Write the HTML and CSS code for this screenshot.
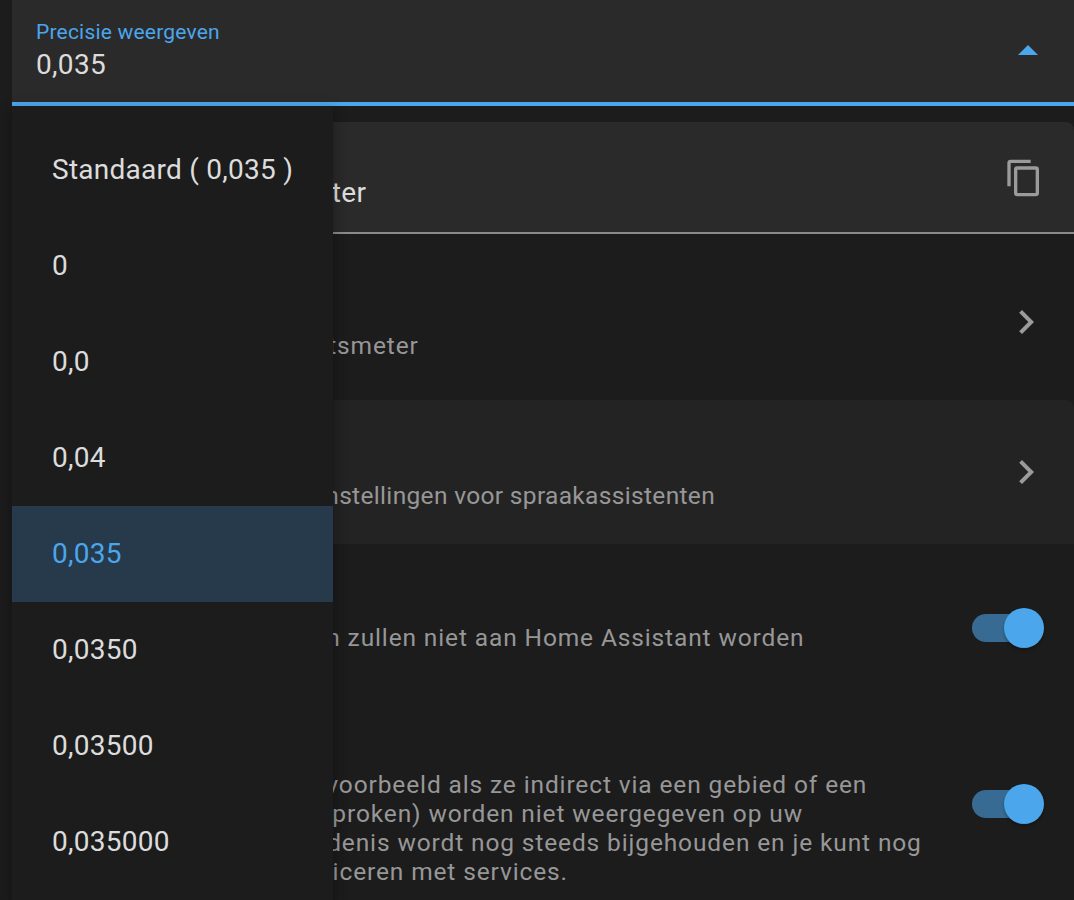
FILE: index.html
```html
<!DOCTYPE html>
<html lang="nl">
  <head>
    <meta charset="UTF-8" />
    <meta name="viewport" content="width=device-width, initial-scale=1.0" />
    <title>Entiteit instellingen</title>
    <link rel="stylesheet" href="styles.css">
  </head>
  <body>
    <div class="page">
      <div class="select">
        <div class="select-text">
          <div class="select-label">Precisie weergeven</div>
          <div class="select-value">0,035</div>
        </div>
        <span class="select-arrow"></span>
      </div>

      <div class="field">
        <div class="field-value">Entiteits-ID: sensor.meter</div>
        <svg class="icon icon-copy" viewBox="0 0 24 24"><path d="M19,21H8V7H19M19,5H8A2,2 0 0,0 6,7V21A2,2 0 0,0 8,23H19A2,2 0 0,0 21,21V7A2,2 0 0,0 19,5M16,1H4A2,2 0 0,0 2,3V17H4V3H16V1Z" /></svg>
      </div>

      <div class="row row-device">
        <div class="row-text">
          <div class="row-title">Apparaat</div>
          <div class="row-sub">Slimme teller electriciteitsmeter</div>
        </div>
        <svg class="icon icon-chevron" viewBox="0 0 24 24"><path d="M8.59,16.58L13.17,12L8.59,7.41L10,6L16,12L10,18L8.59,16.58Z" /></svg>
      </div>

      <div class="row row-voice">
        <div class="row-text">
          <div class="row-title">Spraakassistenten</div>
          <div class="row-sub">Beheer nu, al de entiteitsinstellingen voor spraakassistenten</div>
        </div>
        <svg class="icon icon-chevron" viewBox="0 0 24 24"><path d="M8.59,16.58L13.17,12L8.59,7.41L10,6L16,12L10,18L8.59,16.58Z" /></svg>
      </div>

      <div class="row row-enabled">
        <div class="row-text">
          <div class="row-title">Ingeschakeld</div>
          <div class="row-sub">Uitgeschakelde entiteiten zullen niet aan Home Assistant worden</div>
        </div>
        <div class="switch"><span class="switch-knob"></span></div>
      </div>

      <div class="row row-visible">
        <div class="row-text">
          <div class="row-sub">Verborgen entiteiten (bijvoorbeeld als ze indirect via een gebied of een</div>
          <div class="row-sub">apparaat worden aangesproken) worden niet weergegeven op uw</div>
          <div class="row-sub">dashboard. Hun geschiedenis wordt nog steeds bijgehouden en je kunt nog</div>
          <div class="row-sub">toe steeds mee communiceren met services.</div>
        </div>
        <div class="switch"><span class="switch-knob"></span></div>
      </div>

      <div class="menu">
        <div class="menu-item">Standaard ( 0,035 )</div>
        <div class="menu-item">0</div>
        <div class="menu-item">0,0</div>
        <div class="menu-item">0,04</div>
        <div class="menu-item selected">0,035</div>
        <div class="menu-item">0,0350</div>
        <div class="menu-item">0,03500</div>
        <div class="menu-item">0,035000</div>
      </div>
    </div>
  </body>
</html>
```

FILE: styles.css
```css
html,
body {
  margin: 0;
  height: 100%;
  overflow: hidden;
  background: #1c1c1c;
}

body {
  font-family: Roboto, "Liberation Sans", sans-serif;
  color: #dcdcdc;
}

.page {
  position: relative;
  height: 900px;
  padding-left: 12px;
  overflow: hidden;
}

.select {
  display: flex;
  justify-content: space-between;
  height: 102px;
  padding-left: 24px;
  background: #2a2a2a;
  border-bottom: 4px solid #4ba6ec;
}
.select-text {
  padding-top: 20px;
}
.select-label {
  font-size: 21px;
  line-height: 24px;
  color: #4ba6ec;
  letter-spacing: 0.2px;
}
.select-value {
  padding-top: 1px;
  font-size: 28px;
  line-height: 40px;
  letter-spacing: 0.3px;
}
.select-arrow {
  width: 0;
  height: 0;
  margin: 45px 36px 0 0;
  border-left: 10px solid transparent;
  border-right: 10px solid transparent;
  border-bottom: 10px solid #4ba6ec;
}

.field {
  display: flex;
  justify-content: space-between;
  height: 110px;
  margin-top: 16px;
  padding-left: 32px;
  background: #2a2a2a;
  border-bottom: 2px solid #8a8a8a;
  border-radius: 8px 8px 0 0;
}
.field-value {
  padding-top: 53px;
  font-size: 28px;
  line-height: 36px;
  letter-spacing: 0.38px;
  white-space: nowrap;
}

.icon {
  flex: none;
  fill: #9b9b9b;
}
.icon-copy {
  width: 40px;
  height: 40px;
  margin: 36px 30px 0 0;
}
.icon-chevron {
  width: 48px;
  height: 48px;
  margin-right: 24px;
}

.row {
  display: flex;
  justify-content: space-between;
  padding-left: 32px;
}
.row-text {
  white-space: nowrap;
}
.row-title {
  font-size: 28px;
  line-height: 40px;
}
.row-sub {
  font-size: 24.5px;
  line-height: 29px;
  letter-spacing: 0.87px;
  color: #979797;
}

.row-device {
  height: 166px;
}
.row-device .row-text {
  padding-top: 57px;
}
.row-device .icon-chevron {
  margin-top: 64px;
}

.row-voice {
  height: 144px;
  background: #232323;
  border-radius: 8px 8px 0 0;
}
.row-voice .row-text {
  padding-top: 41px;
}
.row-voice .row-sub {
  letter-spacing: 0.33px;
}
.row-voice .icon-chevron {
  margin-top: 48px;
}

.row-enabled {
  height: 170px;
}
.row-enabled .row-text {
  padding-top: 39px;
}
.row-enabled .switch {
  margin-top: 70px;
}

.row-visible {
  height: 186px;
}
.row-visible .row-text {
  padding-top: 56px;
}
.row-visible .switch {
  margin-top: 76px;
}

.switch {
  position: relative;
  flex: none;
  width: 64px;
  height: 28px;
  margin-right: 38px;
  background: #386b94;
  border-radius: 14px;
}
.switch-knob {
  position: absolute;
  top: -6px;
  right: -8px;
  width: 40px;
  height: 40px;
  background: #4ba6ec;
  border-radius: 50%;
  box-shadow: 0 2px 3px rgba(0, 0, 0, 0.3);
}

.menu {
  position: absolute;
  top: 106px;
  left: 12px;
  width: 321px;
  height: 794px;
  padding: 16px 0;
  box-sizing: border-box;
  background: #1c1c1c;
  box-shadow: 0 5px 5px -3px rgba(0, 0, 0, 0.2), 0 8px 10px 1px rgba(0, 0, 0, 0.14), 0 3px 14px 2px rgba(0, 0, 0, 0.12);
}
.menu-item {
  height: 96px;
  padding-left: 40px;
  font-size: 28px;
  line-height: 96px;
  letter-spacing: 0.25px;
}
.menu-item.selected {
  color: #4ba6ec;
  background: #263a4b;
}
```
